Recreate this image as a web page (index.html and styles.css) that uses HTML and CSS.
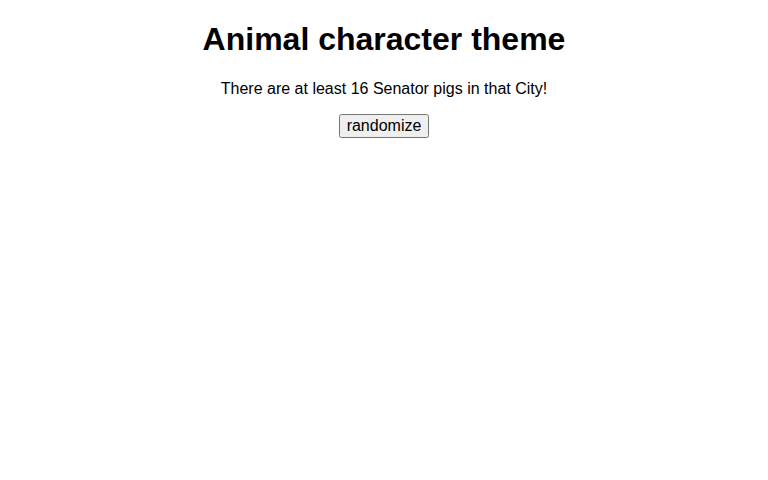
FILE: index.html
```html
<!DOCTYPE html>
<html>
<head lang="en">
    <meta charset="UTF-8">
    <title>Animal character theme</title>
    <link rel="stylesheet" href="styles.css">
    <script>
    var animals = ["pigs", "sheep", "dogs", "horses", "hens"];
    var titles = ["Senator", "Comrade", "Farmer", "Major"];
    var places = ["City", "Farm", "Barn", "Village"];

    function pick(list){
        return list[Math.floor(Math.random() * list.length)];
    }

    window.onload = function(){
        var btn = document.getElementById("randomize");
        var line = document.getElementById("line");
        btn.onclick = function(){
            var n = Math.floor(Math.random() * 30) + 2;
            line.innerHTML = "There are at least " + n + " " + pick(titles) + " " + pick(animals) + " in that " + pick(places) + "!";
        }
    }
    </script>
</head>
<body>
<div class="theme">
    <h1>Animal character theme</h1>
    <p id="line">There are at least 16 Senator pigs in that City!</p>
    <button id="randomize">randomize</button>
</div>
</body>
</html>
```

FILE: styles.css
```css
body {
    margin: 0;
    font-family: "Liberation Sans", Arial, sans-serif;
    color: #000;
    background-color: #fff;
}
.theme {
    text-align: center;
}
.theme h1 {
    font-size: 32px;
    margin: 0.67em 0;
}
.theme p {
    font-size: 16px;
    margin: 16px 0;
}
#randomize {
    font-family: inherit;
    font-size: 16px;
}
```
